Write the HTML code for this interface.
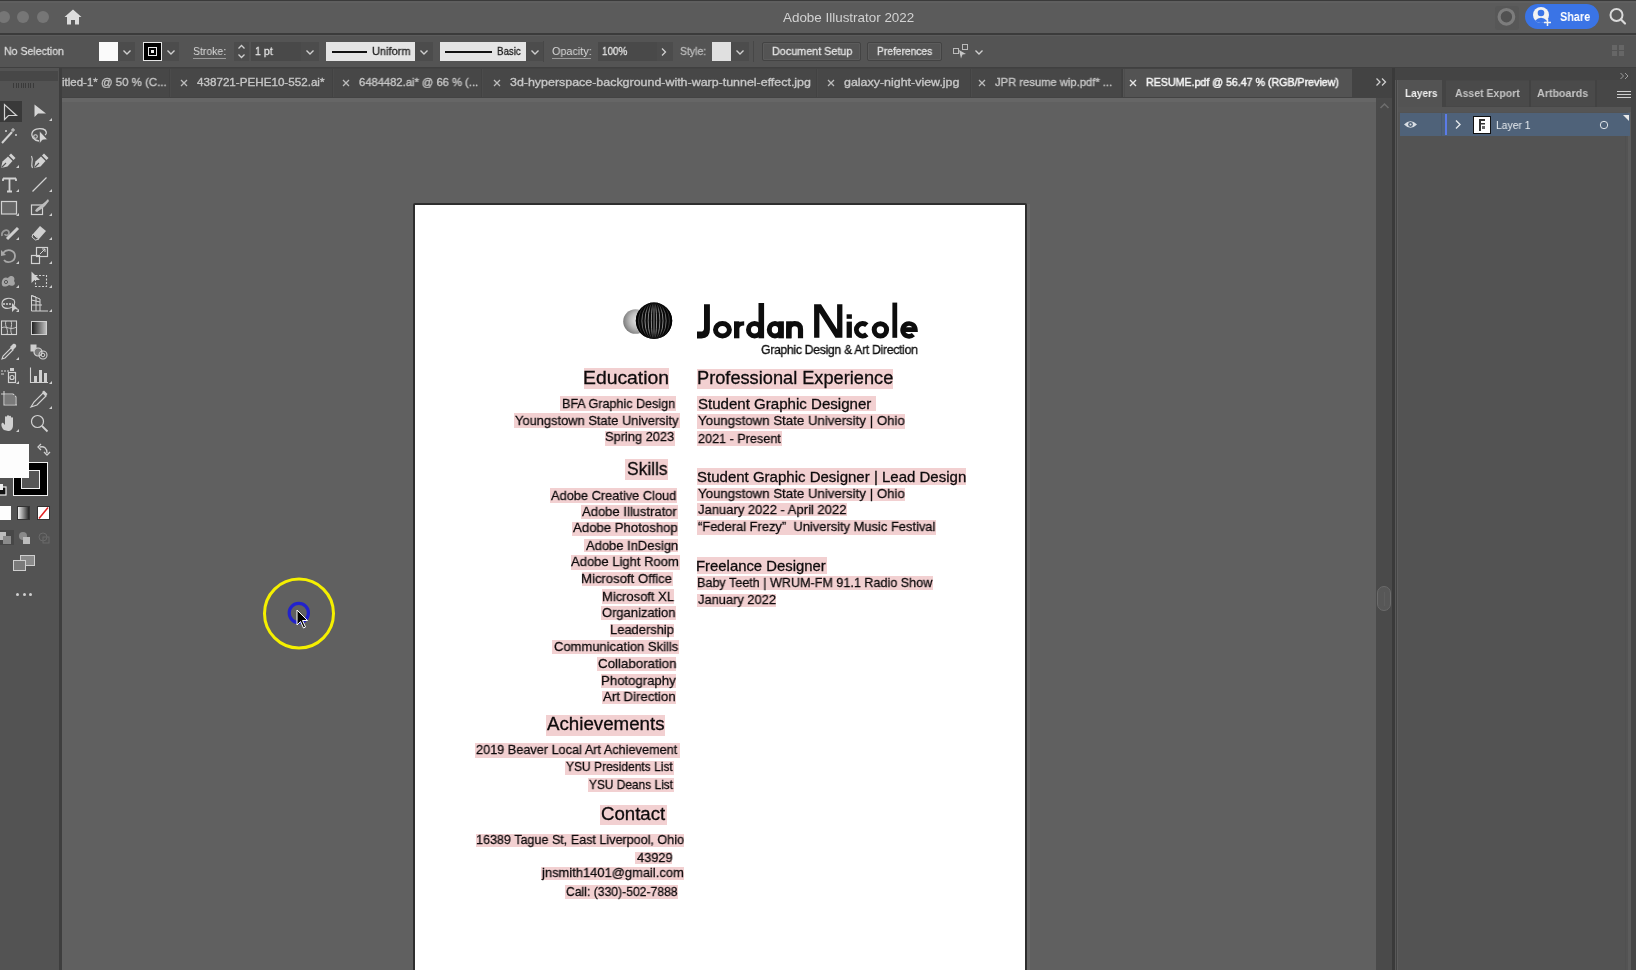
<!DOCTYPE html>
<html><head><meta charset="utf-8">
<style>
*{margin:0;padding:0;box-sizing:border-box}
html,body{width:1636px;height:970px;overflow:hidden;background:#535353;font-family:"Liberation Sans",sans-serif}
.a{position:absolute}
.t{position:absolute;white-space:pre;will-change:transform}
svg{position:absolute;overflow:visible}
</style></head><body>
<div class="a" style="left:0;top:0;width:1636px;height:34px;background:#5b5b5b"></div><div class="a" style="left:0;top:0;width:1636px;height:1px;background:#3a3a3a"></div><div class="a" style="left:0px;top:1px;width:1636px;height:2px;background:#5f5f5f"></div><div class="a" style="left:0;top:33px;width:1636px;height:2px;background:#3b3b3b"></div><div class="a" style="left:0;top:35px;width:1636px;height:33px;background:#545454"></div><div class="a" style="left:0;top:35px;width:1636px;height:1px;background:#5c5c5c"></div><div class="a" style="left:0;top:67px;width:1636px;height:1px;background:#404040"></div><div class="a" style="left:0;top:68px;width:59px;height:902px;background:#535353"></div><div class="a" style="left:0;top:71px;width:58px;height:10px;background:#474747"></div><div class="a" style="left:59px;top:68px;width:3px;height:902px;background:#3e3e3e"></div><div class="a" style="left:62px;top:68px;width:1330px;height:30px;background:#434343"></div><div class="a" style="left:62px;top:98px;width:1314px;height:872px;background:#606060"></div><div class="a" style="left:62px;top:98px;width:1314px;height:4px;background:#666666"></div><div class="a" style="left:1376px;top:98px;width:16px;height:872px;background:#4a4a4a"></div><div class="a" style="left:1377px;top:586px;width:14px;height:25px;border-radius:7px;background:#575757;border:1px solid #6a6a6a"></div><div class="a" style="left:1383.5px;top:592px;width:1px;height:14px;background:#5e5e5e"></div><svg style="left:1379px;top:102px" width="11" height="8" viewBox="0 0 11 8"><path d="M1.5 6 L5.5 2 L9.5 6" fill="none" stroke="#6e6e6e" stroke-width="1.5"/></svg><div class="a" style="left:1392px;top:68px;width:3px;height:902px;background:#3a3a3a"></div><div class="a" style="left:1395px;top:68px;width:241px;height:902px;background:#535353"></div><div class="a" style="left:1395px;top:68px;width:1px;height:902px;background:#585858"></div><div class="a" style="left:1396px;top:80px;width:1px;height:890px;background:#434343"></div><div class="a" style="left:1395px;top:68px;width:241px;height:12px;background:#444444"></div><div class="a" style="left:1397px;top:80px;width:1px;height:890px;background:#5d5d5d"></div><div class="a" style="left:1625px;top:107px;width:1px;height:863px;background:#505050"></div><div class="a" style="left:1628px;top:80px;width:3px;height:890px;background:#5b5b5b"></div><div class="a" style="left:1631px;top:68px;width:5px;height:902px;background:#454545"></div><div class="a" style="left:1398px;top:80px;width:233px;height:27px;background:#474747"></div><div class="a" style="left:1398px;top:80px;width:44px;height:27px;background:#535353"></div><div class="a" style="left:1446px;top:81px;width:83px;height:25px;background:#4a4a4a"></div><div class="a" style="left:1442px;top:80px;width:4px;height:27px;background:#444"></div><div class="a" style="left:1529px;top:80px;width:2px;height:27px;background:#424242"></div><div class="a" style="left:1595px;top:80px;width:2px;height:27px;background:#424242"></div><div class="a" style="left:1531px;top:81px;width:64px;height:25px;background:#4a4a4a"></div><div class="a" style="left:1398px;top:107px;width:233px;height:5px;background:#555555"></div><div class="a" style="left:-2px;top:11px;width:12px;height:12px;border-radius:50%;background:#767676"></div><div class="a" style="left:17px;top:11px;width:12px;height:12px;border-radius:50%;background:#767676"></div><div class="a" style="left:37px;top:11px;width:12px;height:12px;border-radius:50%;background:#767676"></div><svg style="left:63px;top:8px" width="20" height="18" viewBox="0 0 20 18"><path d="M10 1.5 L18.5 9 L16 9 L16 16.5 L12 16.5 L12 12 L8 12 L8 16.5 L4 16.5 L4 9 L1.5 9 Z" fill="#dcdcdc"/></svg><div class="t" style="left:783.00px;top:11.00px;font:normal 13px 'Liberation Sans';line-height:13px;color:#d2d2d2;letter-spacing:0px;transform:scaleX(1.0318);transform-origin:0 0;">Adobe Illustrator 2022</div><div class="a" style="left:1495px;top:6px;width:24px;height:24px;border-radius:3px;background:#575757"></div><svg style="left:1495px;top:5px" width="23" height="23" viewBox="0 0 23 23"><circle cx="11.4" cy="11.8" r="7.3" fill="#515151" stroke="#7c7c7c" stroke-width="3.2"/></svg><div class="a" style="left:1525px;top:4px;width:74px;height:25px;border-radius:13px;background:#3a74e6"></div><svg style="left:1532px;top:6px" width="22" height="20" viewBox="0 0 22 20"><circle cx="9" cy="9" r="8" fill="#f2f2f2"/><circle cx="9" cy="7" r="3.3" fill="#3a74e6"/><path d="M3 14.8 Q9 8.5 15 14.8 Q12.5 17 9 17 Q5.5 17 3 14.8Z" fill="#3a74e6"/><path d="M15.5 13v7M12 16.5h7" stroke="#f2f2f2" stroke-width="1.5"/></svg><div class="t" style="left:1560.00px;top:10.00px;font:bold 13px 'Liberation Sans';line-height:13px;color:#ffffff;letter-spacing:0px;transform:scaleX(0.8356);transform-origin:0 0;">Share</div><svg style="left:1606px;top:5px" width="22" height="22" viewBox="0 0 22 22"><circle cx="10.5" cy="10" r="6" fill="none" stroke="#dadada" stroke-width="2"/><path d="M15 14.5 L19 18.5" stroke="#dadada" stroke-width="2.2" stroke-linecap="round"/></svg><div class="t" style="left:3.50px;top:45.77px;font:normal 11.5px 'Liberation Sans';line-height:11.5px;color:#dadada;letter-spacing:0px;transform:scaleX(0.9181);transform-origin:0 0;-webkit-text-stroke-width:0.3px">No Selection</div><div class="a" style="left:118px;top:42px;width:17px;height:19px;background:#4c4c4c"></div><div class="a" style="left:99px;top:42px;width:19px;height:19px;background:#fafafa"></div><svg style="left:122px;top:49px" width="10" height="7" viewBox="0 0 10 7"><path d="M1.5 1.5 L5 5 L8.5 1.5" fill="none" stroke="#cfcfcf" stroke-width="1.4"/></svg><div class="a" style="left:162px;top:42px;width:17px;height:19px;background:#4c4c4c"></div><div class="a" style="left:143px;top:42px;width:19px;height:19px;background:#000;border:1px solid #e6e6e6"></div><div class="a" style="left:148px;top:47px;width:9px;height:9px;border:1.5px solid #eee"></div><div class="a" style="left:151px;top:50px;width:3px;height:3px;background:#eee"></div><svg style="left:166px;top:49px" width="10" height="7" viewBox="0 0 10 7"><path d="M1.5 1.5 L5 5 L8.5 1.5" fill="none" stroke="#cfcfcf" stroke-width="1.4"/></svg><div class="t" style="left:193.00px;top:46.27px;font:normal 11.5px 'Liberation Sans';line-height:11.5px;color:#d8d8d8;letter-spacing:0px;transform:scaleX(0.9107);transform-origin:0 0;">Stroke:</div><div class="a" style="left:193px;top:58px;width:33px;height:1px;background:#9a9a9a"></div><div class="a" style="left:234px;top:42px;width:15px;height:19px;background:#4c4c4c"></div><svg style="left:236px;top:43px" width="11" height="17" viewBox="0 0 11 17"><path d="M2.5 5.5 L5.5 2.5 L8.5 5.5 M2.5 11.5 L5.5 14.5 L8.5 11.5" fill="none" stroke="#cfcfcf" stroke-width="1.3"/></svg><div class="a" style="left:251px;top:42px;width:50px;height:19px;background:#494949"></div><div class="t" style="left:254.50px;top:46.27px;font:normal 11.5px 'Liberation Sans';line-height:11.5px;color:#e2e2e2;letter-spacing:0px;transform:scaleX(0.9256);transform-origin:0 0;-webkit-text-stroke-width:0.3px">1 pt</div><div class="a" style="left:301px;top:42px;width:18px;height:19px;background:#4c4c4c"></div><svg style="left:305px;top:49px" width="10" height="7" viewBox="0 0 10 7"><path d="M1.5 1.5 L5 5 L8.5 1.5" fill="none" stroke="#cfcfcf" stroke-width="1.4"/></svg><div class="a" style="left:326px;top:42px;width:89px;height:19px;background:#e4e4e4"></div><div class="a" style="left:332px;top:51px;width:35px;height:2px;background:#111"></div><div class="t" style="left:371.50px;top:46.27px;font:normal 11.5px 'Liberation Sans';line-height:11.5px;color:#222;letter-spacing:0px;transform:scaleX(0.9578);transform-origin:0 0;-webkit-text-stroke-width:0.3px">Uniform</div><div class="a" style="left:415px;top:42px;width:18px;height:19px;background:#4c4c4c"></div><svg style="left:419px;top:49px" width="10" height="7" viewBox="0 0 10 7"><path d="M1.5 1.5 L5 5 L8.5 1.5" fill="none" stroke="#cfcfcf" stroke-width="1.4"/></svg><div class="a" style="left:440px;top:42px;width:86px;height:19px;background:#e4e4e4"></div><div class="a" style="left:445px;top:51px;width:47px;height:2px;background:#111"></div><div class="t" style="left:496.50px;top:46.27px;font:normal 11.5px 'Liberation Sans';line-height:11.5px;color:#222;letter-spacing:0px;transform:scaleX(0.8459);transform-origin:0 0;-webkit-text-stroke-width:0.3px">Basic</div><div class="a" style="left:526px;top:42px;width:18px;height:19px;background:#4c4c4c"></div><svg style="left:530px;top:49px" width="10" height="7" viewBox="0 0 10 7"><path d="M1.5 1.5 L5 5 L8.5 1.5" fill="none" stroke="#cfcfcf" stroke-width="1.4"/></svg><div class="a" style="left:543px;top:41px;width:1px;height:21px;background:#474747"></div><div class="t" style="left:552.00px;top:46.27px;font:normal 11.5px 'Liberation Sans';line-height:11.5px;color:#d8d8d8;letter-spacing:0px;transform:scaleX(0.9408);transform-origin:0 0;">Opacity:</div><div class="a" style="left:552px;top:58px;width:39px;height:1px;background:#9a9a9a"></div><div class="a" style="left:598px;top:42px;width:59px;height:19px;background:#494949"></div><div class="t" style="left:601.50px;top:46.27px;font:normal 11.5px 'Liberation Sans';line-height:11.5px;color:#e2e2e2;letter-spacing:0px;transform:scaleX(0.8565);transform-origin:0 0;-webkit-text-stroke-width:0.3px">100%</div><div class="a" style="left:657px;top:42px;width:16px;height:19px;background:#4c4c4c"></div><svg style="left:660px;top:47px" width="8" height="10" viewBox="0 0 8 10"><path d="M2 1.5 L5.5 5 L2 8.5" fill="none" stroke="#cfcfcf" stroke-width="1.3"/></svg><div class="t" style="left:680.00px;top:46.27px;font:normal 11.5px 'Liberation Sans';line-height:11.5px;color:#bcbcbc;letter-spacing:0px;transform:scaleX(0.9102);transform-origin:0 0;-webkit-text-stroke-width:0.3px">Style:</div><div class="a" style="left:731px;top:42px;width:18px;height:19px;background:#4c4c4c"></div><div class="a" style="left:712px;top:42px;width:19px;height:19px;background:#e0e0e0"></div><svg style="left:735px;top:49px" width="10" height="7" viewBox="0 0 10 7"><path d="M1.5 1.5 L5 5 L8.5 1.5" fill="none" stroke="#cfcfcf" stroke-width="1.4"/></svg><div class="a" style="left:753px;top:41px;width:1px;height:21px;background:#474747"></div><div class="a" style="left:762px;top:42px;width:99px;height:19px;border:1px solid #434343;box-shadow:inset 0 0 0 1px #5b5b5b;border-radius:2px"></div><div class="t" style="left:772.00px;top:46.27px;font:normal 11.5px 'Liberation Sans';line-height:11.5px;color:#e2e2e2;letter-spacing:0px;transform:scaleX(0.9383);transform-origin:0 0;-webkit-text-stroke-width:0.3px">Document Setup</div><div class="a" style="left:867px;top:42px;width:75px;height:19px;border:1px solid #434343;box-shadow:inset 0 0 0 1px #5b5b5b;border-radius:2px"></div><div class="t" style="left:876.50px;top:46.27px;font:normal 11.5px 'Liberation Sans';line-height:11.5px;color:#e2e2e2;letter-spacing:0px;transform:scaleX(0.8915);transform-origin:0 0;-webkit-text-stroke-width:0.3px">Preferences</div><svg style="left:952px;top:43px" width="18" height="17" viewBox="0 0 18 17"><rect x="1.5" y="5.5" width="5" height="5" fill="none" stroke="#bbb" stroke-width="1"/><rect x="10.5" y="1.5" width="5" height="5" fill="none" stroke="#bbb" stroke-width="1"/><path d="M7 7 L14 11 L10.5 11.5 L9 15.5Z" fill="#c8c8c8"/></svg><svg style="left:974px;top:49px" width="10" height="7" viewBox="0 0 10 7"><path d="M1.5 1.5 L5 5 L8.5 1.5" fill="none" stroke="#cfcfcf" stroke-width="1.4"/></svg><svg style="left:1611px;top:44px" width="14" height="13" viewBox="0 0 14 13"><path d="M1 1h5v5H1zM8 1h5v5H8zM1 7h5v5H1zM8 7h5v5H8z" fill="#666"/></svg><div class="a" style="left:62px;top:69px;width:109px;height:28px;background:#474747"></div><div class="a" style="left:169px;top:69px;width:1px;height:28px;background:#424242"></div><div class="a" style="left:170px;top:69px;width:1px;height:28px;background:#4b4b4b"></div><div class="t" style="left:62.00px;top:76.77px;font:normal 11.5px 'Liberation Sans';line-height:11.5px;color:#c6c6c6;letter-spacing:0px;transform:scaleX(0.9972);transform-origin:0 0;-webkit-text-stroke-width:0.35px">itled-1* @ 50 % (C...</div><div class="a" style="left:171px;top:69px;width:163px;height:28px;background:#474747"></div><div class="a" style="left:332px;top:69px;width:1px;height:28px;background:#424242"></div><div class="a" style="left:333px;top:69px;width:1px;height:28px;background:#4b4b4b"></div><svg style="left:179.5px;top:79px" width="8" height="8" viewBox="0 0 8 8"><path d="M1 1L7 7M7 1L1 7" stroke="#bcbcbc" stroke-width="1.3"/></svg><div class="t" style="left:196.50px;top:76.77px;font:normal 11.5px 'Liberation Sans';line-height:11.5px;color:#c6c6c6;letter-spacing:0px;transform:scaleX(1.0121);transform-origin:0 0;-webkit-text-stroke-width:0.35px">438721-PEHE10-552.ai*</div><div class="a" style="left:334px;top:69px;width:149px;height:28px;background:#474747"></div><div class="a" style="left:481px;top:69px;width:1px;height:28px;background:#424242"></div><div class="a" style="left:482px;top:69px;width:1px;height:28px;background:#4b4b4b"></div><svg style="left:342px;top:79px" width="8" height="8" viewBox="0 0 8 8"><path d="M1 1L7 7M7 1L1 7" stroke="#bcbcbc" stroke-width="1.3"/></svg><div class="t" style="left:359.00px;top:76.77px;font:normal 11.5px 'Liberation Sans';line-height:11.5px;color:#c6c6c6;letter-spacing:0px;transform:scaleX(0.9748);transform-origin:0 0;-webkit-text-stroke-width:0.35px">6484482.ai* @ 66 % (...</div><div class="a" style="left:483px;top:69px;width:335px;height:28px;background:#474747"></div><div class="a" style="left:816px;top:69px;width:1px;height:28px;background:#424242"></div><div class="a" style="left:817px;top:69px;width:1px;height:28px;background:#4b4b4b"></div><svg style="left:492.5px;top:79px" width="8" height="8" viewBox="0 0 8 8"><path d="M1 1L7 7M7 1L1 7" stroke="#bcbcbc" stroke-width="1.3"/></svg><div class="t" style="left:510.00px;top:76.77px;font:normal 11.5px 'Liberation Sans';line-height:11.5px;color:#c6c6c6;letter-spacing:0px;transform:scaleX(1.0806);transform-origin:0 0;-webkit-text-stroke-width:0.35px">3d-hyperspace-background-with-warp-tunnel-effect.jpg</div><div class="a" style="left:818px;top:69px;width:154px;height:28px;background:#474747"></div><div class="a" style="left:970px;top:69px;width:1px;height:28px;background:#424242"></div><div class="a" style="left:971px;top:69px;width:1px;height:28px;background:#4b4b4b"></div><svg style="left:826.5px;top:79px" width="8" height="8" viewBox="0 0 8 8"><path d="M1 1L7 7M7 1L1 7" stroke="#bcbcbc" stroke-width="1.3"/></svg><div class="t" style="left:844.00px;top:76.77px;font:normal 11.5px 'Liberation Sans';line-height:11.5px;color:#c6c6c6;letter-spacing:0px;transform:scaleX(1.0813);transform-origin:0 0;-webkit-text-stroke-width:0.35px">galaxy-night-view.jpg</div><div class="a" style="left:972px;top:69px;width:151px;height:28px;background:#474747"></div><div class="a" style="left:1121px;top:69px;width:1px;height:28px;background:#424242"></div><div class="a" style="left:1122px;top:69px;width:1px;height:28px;background:#4b4b4b"></div><svg style="left:977.5px;top:79px" width="8" height="8" viewBox="0 0 8 8"><path d="M1 1L7 7M7 1L1 7" stroke="#bcbcbc" stroke-width="1.3"/></svg><div class="t" style="left:995.00px;top:76.77px;font:normal 11.5px 'Liberation Sans';line-height:11.5px;color:#c6c6c6;letter-spacing:0px;transform:scaleX(0.9753);transform-origin:0 0;-webkit-text-stroke-width:0.35px">JPR resume wip.pdf* ...</div><div class="a" style="left:1122px;top:69px;width:230px;height:28px;background:#535353"></div><div class="a" style="left:1122px;top:69px;width:1px;height:28px;background:#404040"></div><div class="a" style="left:1124px;top:69px;width:1px;height:28px;background:#4d4d4d"></div><svg style="left:1129px;top:79px" width="8" height="8" viewBox="0 0 8 8"><path d="M1 1L7 7M7 1L1 7" stroke="#e6e6e6" stroke-width="1.4"/></svg><div class="t" style="left:1146.00px;top:76.77px;font:normal 11.5px 'Liberation Sans';line-height:11.5px;color:#f4f4f4;letter-spacing:0px;transform:scaleX(0.9248);transform-origin:0 0;-webkit-text-stroke-width:0.5px">RESUME.pdf @ 56.47 % (RGB/Preview)</div><svg style="left:1375px;top:77px" width="13" height="10" viewBox="0 0 13 10"><path d="M1.5 1.5 L5 5 L1.5 8.5 M7 1.5 L10.5 5 L7 8.5" fill="none" stroke="#cfcfcf" stroke-width="1.3"/></svg><div class="a" style="left:59px;top:68px;width:3px;height:30px;background:#3e3e3e"></div><svg style="left:1619px;top:72px" width="12" height="8" viewBox="0 0 12 8"><path d="M1.5 1 L4.5 4 L1.5 7 M6 1 L9 4 L6 7" fill="none" stroke="#9c9c9c" stroke-width="1"/></svg><div class="t" style="left:1404.50px;top:87.69px;font:bold 11px 'Liberation Sans';line-height:11px;color:#f0f0f0;letter-spacing:0px;transform:scaleX(0.9193);transform-origin:0 0;">Layers</div><div class="t" style="left:1455.00px;top:87.69px;font:bold 11px 'Liberation Sans';line-height:11px;color:#c4c4c4;letter-spacing:0px;transform:scaleX(0.9532);transform-origin:0 0;">Asset Export</div><div class="t" style="left:1537.00px;top:87.69px;font:bold 11px 'Liberation Sans';line-height:11px;color:#c4c4c4;letter-spacing:0px;transform:scaleX(0.9725);transform-origin:0 0;">Artboards</div><div class="a" style="left:1617px;top:91px;width:14px;height:1px;background:#cfcfcf"></div><div class="a" style="left:1617px;top:94px;width:14px;height:1px;background:#cfcfcf"></div><div class="a" style="left:1617px;top:97px;width:14px;height:1px;background:#cfcfcf"></div><div class="a" style="left:1400px;top:113px;width:230px;height:23px;background:#4f6279"></div><svg style="left:1403px;top:119px" width="15" height="11" viewBox="0 0 15 11"><path d="M1 5.5 Q7.5 -1 14 5.5 Q7.5 12 1 5.5Z" fill="#d8dde3"/><circle cx="7.5" cy="5.5" r="2.4" fill="#4f6279"/><circle cx="7.5" cy="5.5" r="1" fill="#d8dde3"/></svg><div class="a" style="left:1441px;top:113px;width:1px;height:23px;background:#4a5a70"></div><div class="a" style="left:1445px;top:114px;width:2px;height:21px;background:#5b7be8"></div><svg style="left:1454px;top:119px" width="8" height="11" viewBox="0 0 8 11"><path d="M2 1.5 L6 5.5 L2 9.5" fill="none" stroke="#e2e6ea" stroke-width="1.4"/></svg><div class="a" style="left:1473px;top:116px;width:18px;height:18px;background:#fff;border:1px solid #111"></div><svg style="left:1476px;top:118px" width="12" height="14" viewBox="0 0 12 14"><path d="M3 1h6v2H5v2h4v1.5H5V13H3z" fill="#333"/><path d="M6 8h3v3H6z" fill="#666"/></svg><div class="t" style="left:1496.00px;top:119.69px;font:normal 11px 'Liberation Sans';line-height:11px;color:#e8ecf0;letter-spacing:0px;transform:scaleX(0.9433);transform-origin:0 0;">Layer 1</div><svg style="left:1599px;top:120px" width="10" height="10" viewBox="0 0 10 10"><circle cx="5" cy="5" r="3.7" fill="none" stroke="#e0e4e8" stroke-width="1"/></svg><svg style="left:1622px;top:114px" width="8" height="8" viewBox="0 0 8 8"><path d="M1 1 L7 1 L7 7Z" fill="#e8e8e8"/></svg><div class="a" style="left:1027px;top:204px;width:3px;height:766px;background:#686868"></div><div class="a" style="left:413px;top:203px;width:614px;height:767px;background:#2e2e2e;border-radius:2px 2px 0 0"></div><div class="a" style="left:415px;top:205px;width:610px;height:765px;background:#ffffff"></div><div class="a" style="left:583.7px;top:368.0px;width:85.6px;height:21.3px;background:#f2d0d1"></div><div class="t" style="left:583.29px;top:370.09px;font:normal 17.5px 'Liberation Sans';line-height:17.5px;color:#0e0b0c;letter-spacing:0px;transform:scaleX(1.1051);transform-origin:0 0;-webkit-text-stroke:0.3px #0e0b0c">Education</div><div class="a" style="left:560.0px;top:395.5px;width:116.0px;height:15.8px;background:#f2d0d1"></div><div class="t" style="left:562.06px;top:397.46px;font:normal 13.4px 'Liberation Sans';line-height:13.4px;color:#0e0b0c;letter-spacing:0px;transform:scaleX(0.9377);transform-origin:0 0;-webkit-text-stroke:0.28px #0e0b0c">BFA Graphic Design</div><div class="a" style="left:514.0px;top:413.0px;width:165.7px;height:14.8px;background:#f2d0d1"></div><div class="t" style="left:515.30px;top:413.96px;font:normal 13.4px 'Liberation Sans';line-height:13.4px;color:#0e0b0c;letter-spacing:0px;transform:scaleX(0.9620);transform-origin:0 0;-webkit-text-stroke:0.28px #0e0b0c">Youngstown State University</div><div class="a" style="left:604.5px;top:431.0px;width:70.3px;height:14.6px;background:#f2d0d1"></div><div class="t" style="left:605.40px;top:430.46px;font:normal 13.4px 'Liberation Sans';line-height:13.4px;color:#0e0b0c;letter-spacing:0px;transform:scaleX(0.9586);transform-origin:0 0;-webkit-text-stroke:0.28px #0e0b0c">Spring 2023</div><div class="a" style="left:625.1px;top:459.2px;width:42.9px;height:20.8px;background:#f2d0d1"></div><div class="t" style="left:626.50px;top:461.49px;font:normal 17.5px 'Liberation Sans';line-height:17.5px;color:#0e0b0c;letter-spacing:0px;transform:scaleX(0.9930);transform-origin:0 0;-webkit-text-stroke:0.3px #0e0b0c">Skills</div><div class="a" style="left:550.4px;top:488.4px;width:126.6px;height:14.6px;background:#f2d0d1"></div><div class="t" style="left:551.40px;top:488.66px;font:normal 13.4px 'Liberation Sans';line-height:13.4px;color:#0e0b0c;letter-spacing:0px;transform:scaleX(0.9566);transform-origin:0 0;-webkit-text-stroke:0.28px #0e0b0c">Adobe Creative Cloud</div><div class="a" style="left:581.0px;top:505.0px;width:97.4px;height:14.0px;background:#f2d0d1"></div><div class="t" style="left:582.40px;top:505.36px;font:normal 13.4px 'Liberation Sans';line-height:13.4px;color:#0e0b0c;letter-spacing:0px;transform:scaleX(0.9720);transform-origin:0 0;-webkit-text-stroke:0.28px #0e0b0c">Adobe Illustrator</div><div class="a" style="left:572.3px;top:521.8px;width:106.1px;height:13.9px;background:#f2d0d1"></div><div class="t" style="left:573.40px;top:521.36px;font:normal 13.4px 'Liberation Sans';line-height:13.4px;color:#0e0b0c;letter-spacing:0px;transform:scaleX(0.9837);transform-origin:0 0;-webkit-text-stroke:0.28px #0e0b0c">Adobe Photoshop</div><div class="a" style="left:584.2px;top:538.5px;width:94.2px;height:13.9px;background:#f2d0d1"></div><div class="t" style="left:585.60px;top:538.76px;font:normal 13.4px 'Liberation Sans';line-height:13.4px;color:#0e0b0c;letter-spacing:0px;transform:scaleX(0.9679);transform-origin:0 0;-webkit-text-stroke:0.28px #0e0b0c">Adobe InDesign</div><div class="a" style="left:570.6px;top:555.0px;width:109.2px;height:14.7px;background:#f2d0d1"></div><div class="t" style="left:571.30px;top:555.46px;font:normal 13.4px 'Liberation Sans';line-height:13.4px;color:#0e0b0c;letter-spacing:0px;transform:scaleX(0.9723);transform-origin:0 0;-webkit-text-stroke:0.28px #0e0b0c">Adobe Light Room</div><div class="a" style="left:581.7px;top:571.8px;width:91.5px;height:14.6px;background:#f2d0d1"></div><div class="t" style="left:581.42px;top:572.16px;font:normal 13.4px 'Liberation Sans';line-height:13.4px;color:#0e0b0c;letter-spacing:0px;transform:scaleX(0.9812);transform-origin:0 0;-webkit-text-stroke:0.28px #0e0b0c">Microsoft Office</div><div class="a" style="left:601.6px;top:589.4px;width:72.4px;height:14.6px;background:#f2d0d1"></div><div class="t" style="left:601.73px;top:589.96px;font:normal 13.4px 'Liberation Sans';line-height:13.4px;color:#0e0b0c;letter-spacing:0px;transform:scaleX(0.9676);transform-origin:0 0;-webkit-text-stroke:0.28px #0e0b0c">Microsoft XL</div><div class="a" style="left:601.0px;top:606.0px;width:74.6px;height:14.2px;background:#f2d0d1"></div><div class="t" style="left:602.00px;top:606.06px;font:normal 13.4px 'Liberation Sans';line-height:13.4px;color:#0e0b0c;letter-spacing:0px;transform:scaleX(0.9672);transform-origin:0 0;-webkit-text-stroke:0.28px #0e0b0c">Organization</div><div class="a" style="left:609.7px;top:624.0px;width:64.3px;height:13.0px;background:#f2d0d1"></div><div class="t" style="left:610.04px;top:623.16px;font:normal 13.4px 'Liberation Sans';line-height:13.4px;color:#0e0b0c;letter-spacing:0px;transform:scaleX(0.9643);transform-origin:0 0;-webkit-text-stroke:0.28px #0e0b0c">Leadership</div><div class="a" style="left:552.3px;top:639.6px;width:126.4px;height:14.8px;background:#f2d0d1"></div><div class="t" style="left:553.50px;top:639.56px;font:normal 13.4px 'Liberation Sans';line-height:13.4px;color:#0e0b0c;letter-spacing:0px;transform:scaleX(0.9704);transform-origin:0 0;-webkit-text-stroke:0.28px #0e0b0c">Communication Skills</div><div class="a" style="left:597.0px;top:657.0px;width:79.4px;height:14.0px;background:#f2d0d1"></div><div class="t" style="left:598.00px;top:656.96px;font:normal 13.4px 'Liberation Sans';line-height:13.4px;color:#0e0b0c;letter-spacing:0px;transform:scaleX(0.9942);transform-origin:0 0;-webkit-text-stroke:0.28px #0e0b0c">Collaboration</div><div class="a" style="left:601.0px;top:673.8px;width:75.4px;height:14.2px;background:#f2d0d1"></div><div class="t" style="left:601.02px;top:673.66px;font:normal 13.4px 'Liberation Sans';line-height:13.4px;color:#0e0b0c;letter-spacing:0px;transform:scaleX(0.9835);transform-origin:0 0;-webkit-text-stroke:0.28px #0e0b0c">Photography</div><div class="a" style="left:602.3px;top:690.6px;width:73.7px;height:13.4px;background:#f2d0d1"></div><div class="t" style="left:603.30px;top:689.76px;font:normal 13.4px 'Liberation Sans';line-height:13.4px;color:#0e0b0c;letter-spacing:0px;transform:scaleX(0.9861);transform-origin:0 0;-webkit-text-stroke:0.28px #0e0b0c">Art Direction</div><div class="a" style="left:545.8px;top:715.0px;width:119.2px;height:20.8px;background:#f2d0d1"></div><div class="t" style="left:546.80px;top:716.29px;font:normal 17.5px 'Liberation Sans';line-height:17.5px;color:#0e0b0c;letter-spacing:0px;transform:scaleX(1.0693);transform-origin:0 0;-webkit-text-stroke:0.3px #0e0b0c">Achievements</div><div class="a" style="left:475.4px;top:743.4px;width:204.6px;height:15.1px;background:#f2d0d1"></div><div class="t" style="left:476.40px;top:743.26px;font:normal 13.4px 'Liberation Sans';line-height:13.4px;color:#0e0b0c;letter-spacing:0px;transform:scaleX(0.9485);transform-origin:0 0;-webkit-text-stroke:0.28px #0e0b0c">2019 Beaver Local Art Achievement</div><div class="a" style="left:564.9px;top:760.7px;width:109.3px;height:14.7px;background:#f2d0d1"></div><div class="t" style="left:566.40px;top:760.46px;font:normal 13.4px 'Liberation Sans';line-height:13.4px;color:#0e0b0c;letter-spacing:0px;transform:scaleX(0.8965);transform-origin:0 0;-webkit-text-stroke:0.28px #0e0b0c">YSU Presidents List</div><div class="a" style="left:587.6px;top:778.3px;width:86.6px;height:14.0px;background:#f2d0d1"></div><div class="t" style="left:588.80px;top:777.76px;font:normal 13.4px 'Liberation Sans';line-height:13.4px;color:#0e0b0c;letter-spacing:0px;transform:scaleX(0.8882);transform-origin:0 0;-webkit-text-stroke:0.28px #0e0b0c">YSU Deans List</div><div class="a" style="left:600.0px;top:804.5px;width:66.8px;height:20.5px;background:#f2d0d1"></div><div class="t" style="left:601.10px;top:806.29px;font:normal 17.5px 'Liberation Sans';line-height:17.5px;color:#0e0b0c;letter-spacing:0px;transform:scaleX(1.0637);transform-origin:0 0;-webkit-text-stroke:0.3px #0e0b0c">Contact</div><div class="a" style="left:475.8px;top:833.9px;width:208.6px;height:13.6px;background:#f2d0d1"></div><div class="t" style="left:475.96px;top:833.26px;font:normal 13.4px 'Liberation Sans';line-height:13.4px;color:#0e0b0c;letter-spacing:0px;transform:scaleX(0.9384);transform-origin:0 0;-webkit-text-stroke:0.28px #0e0b0c">16389 Tague St, East Liverpool, Ohio</div><div class="a" style="left:635.3px;top:851.5px;width:36.7px;height:12.5px;background:#f2d0d1"></div><div class="t" style="left:636.80px;top:851.36px;font:normal 13.4px 'Liberation Sans';line-height:13.4px;color:#0e0b0c;letter-spacing:0px;transform:scaleX(0.9568);transform-origin:0 0;-webkit-text-stroke:0.28px #0e0b0c">43929</div><div class="a" style="left:540.7px;top:866.9px;width:143.7px;height:13.1px;background:#f2d0d1"></div><div class="t" style="left:542.37px;top:866.36px;font:normal 13.4px 'Liberation Sans';line-height:13.4px;color:#0e0b0c;letter-spacing:0px;transform:scaleX(0.9657);transform-origin:0 0;-webkit-text-stroke:0.28px #0e0b0c">jnsmith1401@gmail.com</div><div class="a" style="left:564.9px;top:884.5px;width:112.9px;height:14.7px;background:#f2d0d1"></div><div class="t" style="left:565.90px;top:884.66px;font:normal 13.4px 'Liberation Sans';line-height:13.4px;color:#0e0b0c;letter-spacing:0px;transform:scaleX(0.9087);transform-origin:0 0;-webkit-text-stroke:0.28px #0e0b0c">Call: (330)-502-7888</div><div class="a" style="left:697.0px;top:368.5px;width:196.2px;height:20.8px;background:#f2d0d1"></div><div class="t" style="left:696.56px;top:369.79px;font:normal 17.5px 'Liberation Sans';line-height:17.5px;color:#0e0b0c;letter-spacing:0px;transform:scaleX(1.0402);transform-origin:0 0;-webkit-text-stroke:0.3px #0e0b0c">Professional Experience</div><div class="a" style="left:697.0px;top:395.5px;width:178.6px;height:15.1px;background:#f2d0d1"></div><div class="t" style="left:697.60px;top:396.88px;font:normal 14.2px 'Liberation Sans';line-height:14.2px;color:#0e0b0c;letter-spacing:0px;transform:scaleX(1.0616);transform-origin:0 0;-webkit-text-stroke:0.28px #0e0b0c">Student Graphic Designer</div><div class="a" style="left:697.0px;top:414.0px;width:207.5px;height:15.0px;background:#f2d0d1"></div><div class="t" style="left:697.60px;top:414.46px;font:normal 13.4px 'Liberation Sans';line-height:13.4px;color:#0e0b0c;letter-spacing:0px;transform:scaleX(0.9884);transform-origin:0 0;-webkit-text-stroke:0.28px #0e0b0c">Youngstown State University | Ohio</div><div class="a" style="left:697.0px;top:431.1px;width:84.7px;height:14.7px;background:#f2d0d1"></div><div class="t" style="left:697.60px;top:431.56px;font:normal 13.4px 'Liberation Sans';line-height:13.4px;color:#0e0b0c;letter-spacing:0px;transform:scaleX(0.9431);transform-origin:0 0;-webkit-text-stroke:0.28px #0e0b0c">2021 - Present</div><div class="a" style="left:697.1px;top:468.0px;width:269.1px;height:16.8px;background:#f2d0d1"></div><div class="t" style="left:697.40px;top:469.78px;font:normal 14.2px 'Liberation Sans';line-height:14.2px;color:#0e0b0c;letter-spacing:0px;transform:scaleX(1.0580);transform-origin:0 0;-webkit-text-stroke:0.28px #0e0b0c">Student Graphic Designer | Lead Design</div><div class="a" style="left:697.0px;top:487.5px;width:207.5px;height:13.6px;background:#f2d0d1"></div><div class="t" style="left:697.60px;top:486.76px;font:normal 13.4px 'Liberation Sans';line-height:13.4px;color:#0e0b0c;letter-spacing:0px;transform:scaleX(0.9884);transform-origin:0 0;-webkit-text-stroke:0.28px #0e0b0c">Youngstown State University | Ohio</div><div class="a" style="left:697.0px;top:503.4px;width:149.9px;height:13.0px;background:#f2d0d1"></div><div class="t" style="left:697.60px;top:503.16px;font:normal 13.4px 'Liberation Sans';line-height:13.4px;color:#0e0b0c;letter-spacing:0px;transform:scaleX(0.9725);transform-origin:0 0;-webkit-text-stroke:0.28px #0e0b0c">January 2022 - April 2022</div><div class="a" style="left:697.0px;top:520.0px;width:238.5px;height:14.5px;background:#f2d0d1"></div><div class="t" style="left:697.60px;top:519.76px;font:normal 13.4px 'Liberation Sans';line-height:13.4px;color:#0e0b0c;letter-spacing:0px;transform:scaleX(0.9638);transform-origin:0 0;-webkit-text-stroke:0.28px #0e0b0c">“Federal Frezy”  University Music Festival</div><div class="a" style="left:696.7px;top:557.2px;width:130.3px;height:16.6px;background:#f2d0d1"></div><div class="t" style="left:696.35px;top:558.78px;font:normal 14.2px 'Liberation Sans';line-height:14.2px;color:#0e0b0c;letter-spacing:0px;transform:scaleX(1.0481);transform-origin:0 0;-webkit-text-stroke:0.28px #0e0b0c">Freelance Designer</div><div class="a" style="left:697.0px;top:576.2px;width:236.2px;height:14.3px;background:#f2d0d1"></div><div class="t" style="left:696.66px;top:576.06px;font:normal 13.4px 'Liberation Sans';line-height:13.4px;color:#0e0b0c;letter-spacing:0px;transform:scaleX(0.9397);transform-origin:0 0;-webkit-text-stroke:0.28px #0e0b0c">Baby Teeth | WRUM-FM 91.1 Radio Show</div><div class="a" style="left:697.0px;top:593.7px;width:78.8px;height:13.5px;background:#f2d0d1"></div><div class="t" style="left:697.60px;top:592.86px;font:normal 13.4px 'Liberation Sans';line-height:13.4px;color:#0e0b0c;letter-spacing:0px;transform:scaleX(0.9616);transform-origin:0 0;-webkit-text-stroke:0.28px #0e0b0c">January 2022</div><svg style="left:690px;top:295px" width="240" height="50" viewBox="690 295 240 50"><g fill="#0d0d0d">
<path d="M704 304.2 H709.9 V329.5 Q709.9 338.4 701.5 338.4 H697 V331.6 H700.8 Q704 331.6 704 328.5 Z"/>
<path d="M734 321.3 H739.4 V338.3 H734 Z"/>
<rect x="758.5" y="303" width="5.6" height="35.3"/>
<rect x="778.3" y="321.3" width="5.6" height="17"/>
<rect x="786.1" y="321.3" width="5.4" height="17"/>
<path d="M814.1 304.2 H819.4 V337.8 H814.1 Z M837.1 304.2 H842.4 V337.8 H837.1 Z M814.1 304.2 H821 L842.4 337.8 H835.5 Z"/>
<rect x="846.6" y="314.3" width="5.3" height="4.5"/><rect x="846.6" y="321.6" width="5.3" height="16.2"/>
<rect x="892.4" y="302.6" width="4.8" height="35.2"/>
</g><g fill="none" stroke="#0d0d0d" stroke-width="5">
<ellipse cx="722.45" cy="329.7" rx="6.95" ry="6.25"/>
<path d="M736.7 330 Q736.7 323.5 744.2 323.4" stroke-width="4.2"/>
<ellipse cx="754.6" cy="329.7" rx="6.1" ry="6.25"/>
<ellipse cx="775" cy="329.7" rx="5.7" ry="6.25"/>
<path d="M788.8 338.3 V330 Q788.8 323.6 794.7 323.6 Q800.5 323.6 800.5 329.5 V338.3" stroke-width="5.2"/>
<path d="M866.8 325.2 A6.2 6.2 0 1 0 866.8 334.4" />
<ellipse cx="880.4" cy="329.8" rx="6.2" ry="6.1"/>
<path d="M902.6 329.6 H915.4 A6.4 6.4 0 1 0 913.4 334.6" stroke-width="4.6"/>
</g></svg><div class="t" style="left:761.00px;top:342.99px;font:normal 13.6px 'Liberation Sans';line-height:13.6px;color:#111;letter-spacing:-0.35px;transform:scaleX(0.9003);transform-origin:0 0;-webkit-text-stroke:0.35px #111">Graphic Design &amp; Art Direction</div><svg style="left:615px;top:295px" width="70" height="50" viewBox="615 295 70 50">
<defs><radialGradient id="lg" cx="0.62" cy="0.45" r="0.7"><stop offset="0" stop-color="#f0f0f0"/><stop offset="0.5" stop-color="#bcbcbc"/><stop offset="1" stop-color="#6a6a6a"/></radialGradient>
<radialGradient id="vg" cx="0.5" cy="0.5" r="0.5"><stop offset="0.6" stop-color="#000" stop-opacity="0"/><stop offset="1" stop-color="#000" stop-opacity="0.95"/></radialGradient><clipPath id="dc"><circle cx="654" cy="320.8" r="18.2"/></clipPath></defs>
<circle cx="635.5" cy="321.5" r="12.3" fill="url(#lg)"/>
<circle cx="654" cy="320.8" r="18.2" fill="#0c0c0c"/>
<g clip-path="url(#dc)" fill="none" stroke="#b8b8b8" stroke-width="0.7">
<path d="M654 303 V339"/><ellipse cx="654" cy="320.8" rx="2.6" ry="19.5"/><ellipse cx="654" cy="320.8" rx="5.8" ry="19.5"/><ellipse cx="654" cy="320.8" rx="9" ry="19.5"/><ellipse cx="654" cy="320.8" rx="12.2" ry="19.5"/><ellipse cx="654" cy="320.8" rx="15.4" ry="19.5"/>
</g><circle cx="654" cy="320.8" r="18.2" fill="url(#vg)"/></g></svg><svg style="left:255px;top:570px" width="90" height="90" viewBox="255 570 90 90"><circle cx="299" cy="613.5" r="34.5" fill="none" stroke="#f5f000" stroke-width="3"/><circle cx="298.8" cy="613" r="9.6" fill="none" stroke="#2222cc" stroke-width="3.2"/><path d="M297 610 L297 625 L300.5 621.5 L303.5 628 L305.5 627 L302.5 620.5 L307.5 620.5Z" fill="#000" stroke="#fff" stroke-width="1"/></svg><div class="a" style="left:13px;top:83px;width:21px;height:5px;background:repeating-linear-gradient(90deg,#3a3a3a 0 1px,transparent 1px 2.5px)"></div><div class="a" style="left:0px;top:101px;width:22px;height:21px;background:#393939"></div><svg style="left:3px;top:103px" width="16" height="18" viewBox="0 0 16 18" fill="none" stroke="#d2d2d2" stroke-width="1.2"><path d="M1.5 1.5 L1.5 16.5 L5.5 12.5 L13.5 12.5Z" stroke-width="1.2"/></svg><svg style="left:33px;top:103px" width="16" height="18" viewBox="0 0 16 18" fill="none" stroke="#d2d2d2" stroke-width="1.2"><path d="M1.5 1.5 L1.5 14 L5 10.5 L13 10.5Z" fill="#d6d6d6" stroke="none"/></svg><svg style="left:49px;top:118px" width="3" height="3" viewBox="0 0 3 3"><path d="M3 0 L3 3 L0 3Z" fill="#cfcfcf"/></svg><svg style="left:0px;top:127px" width="18" height="18" viewBox="0 0 18 18" fill="none" stroke="#d2d2d2" stroke-width="1.2"><path d="M2 16 L12 5" stroke-width="2"/><path d="M13 1v4M11 3h4M6 3v2M5 4h2M16 7v2M15 8h2" stroke-width="1"/></svg><svg style="left:30px;top:126px" width="20" height="20" viewBox="0 0 20 20" fill="none" stroke="#d2d2d2" stroke-width="1.2"><path d="M9 15 C3 14 1 10 2 7 C3 3 9 2 13 3 C17 4 17 8 15 9" stroke-width="1.3"/><circle cx="5.5" cy="10.5" r="1.8" stroke-width="1.1"/><path d="M9.5 5 L9.5 17.5 L12.5 14 L17.5 13.5Z" fill="#d6d6d6" stroke="#535353" stroke-width="0.6"/></svg><svg style="left:0px;top:151px" width="18" height="18" viewBox="0 0 18 18" fill="none" stroke="#d2d2d2" stroke-width="1.2"><path d="M1 17 L2.5 10.5 L8 5.5 L12.5 10 L7.5 15.5Z" fill="#d2d2d2" stroke="none"/><path d="M9 4.5 L11 2.5 L15.5 7 L13.5 9Z" fill="#d2d2d2" stroke="none"/><path d="M1.5 16.5 L6 12" stroke="#535353" stroke-width="1.1"/></svg><svg style="left:16px;top:165px" width="3" height="3" viewBox="0 0 3 3"><path d="M3 0 L3 3 L0 3Z" fill="#cfcfcf"/></svg><svg style="left:29px;top:151px" width="20" height="18" viewBox="0 0 20 18" fill="none" stroke="#d2d2d2" stroke-width="1.2"><path d="M5 17 L6.5 10.5 L12 5.5 L16.5 10 L11.5 15.5Z" fill="#d2d2d2" stroke="none"/><path d="M13 4.5 L15 2.5 L19.5 7 L17.5 9Z" fill="#d2d2d2" stroke="none"/><path d="M5.5 16.5 L10 12" stroke="#535353" stroke-width="1.1"/><path d="M3.5 17 C1 13 5 10 2.5 5" stroke-width="1.1"/></svg><svg style="left:1px;top:176px" width="17" height="17" viewBox="0 0 17 17" fill="none" stroke="#d2d2d2" stroke-width="1.2"><path d="M2 2.5 H15 M8.5 2.5 V15.5 M6 15.5 H11 M2 2.5 V5 M15 2.5 V5" stroke-width="1.8"/></svg><svg style="left:16px;top:189px" width="3" height="3" viewBox="0 0 3 3"><path d="M3 0 L3 3 L0 3Z" fill="#cfcfcf"/></svg><svg style="left:31px;top:176px" width="17" height="17" viewBox="0 0 17 17" fill="none" stroke="#d2d2d2" stroke-width="1.2"><path d="M1.5 15.5 L15.5 1.5" stroke-width="1.3"/></svg><svg style="left:49px;top:189px" width="3" height="3" viewBox="0 0 3 3"><path d="M3 0 L3 3 L0 3Z" fill="#cfcfcf"/></svg><svg style="left:0px;top:200px" width="19" height="16" viewBox="0 0 19 16" fill="none" stroke="#d2d2d2" stroke-width="1.2"><rect x="1.5" y="1.5" width="15" height="12.5" fill="#666" stroke-width="1.2"/></svg><svg style="left:16px;top:213px" width="3" height="3" viewBox="0 0 3 3"><path d="M3 0 L3 3 L0 3Z" fill="#cfcfcf"/></svg><svg style="left:30px;top:198px" width="20" height="19" viewBox="0 0 20 19" fill="none" stroke="#d2d2d2" stroke-width="1.2"><rect x="1.5" y="7" width="11" height="9.5" stroke-width="1.2"/><path d="M5 13 C7 9 12 7 15 4 L18 1 L19 3 L15 8 C12 11 9 12 7 14Z" fill="#bdbdbd" stroke="none"/></svg><svg style="left:49px;top:213px" width="3" height="3" viewBox="0 0 3 3"><path d="M3 0 L3 3 L0 3Z" fill="#cfcfcf"/></svg><svg style="left:0px;top:223px" width="20" height="18" viewBox="0 0 20 18" fill="none" stroke="#d2d2d2" stroke-width="1.2"><path d="M2 13 C1 7 9 5 9 10 C9 13 5 13 5 11" stroke="#9a9a9a" stroke-width="1.8"/><path d="M7 16 L18 5" stroke="#cfcfcf" stroke-width="3"/></svg><svg style="left:16px;top:237px" width="3" height="3" viewBox="0 0 3 3"><path d="M3 0 L3 3 L0 3Z" fill="#cfcfcf"/></svg><svg style="left:30px;top:223px" width="18" height="18" viewBox="0 0 18 18" fill="none" stroke="#d2d2d2" stroke-width="1.2"><path d="M3 11 L10 3 L16 8 L9 16Z" fill="#cfcfcf" stroke="none"/><path d="M3 11 L6 14 L9 16 L5.5 17 L2 14Z" stroke-width="1"/></svg><svg style="left:49px;top:237px" width="3" height="3" viewBox="0 0 3 3"><path d="M3 0 L3 3 L0 3Z" fill="#cfcfcf"/></svg><svg style="left:0px;top:247px" width="18" height="18" viewBox="0 0 18 18" fill="none" stroke="#d2d2d2" stroke-width="1.2"><path d="M3 6 C7 1 15 3 15 9 C15 15 7 17 4 13" stroke="#a8a8a8" stroke-width="1.8"/><path d="M1 3 L6 8 L1 9Z" fill="#a8a8a8" stroke="none"/></svg><svg style="left:16px;top:261px" width="3" height="3" viewBox="0 0 3 3"><path d="M3 0 L3 3 L0 3Z" fill="#cfcfcf"/></svg><svg style="left:30px;top:246px" width="19" height="19" viewBox="0 0 19 19" fill="none" stroke="#d2d2d2" stroke-width="1.2"><rect x="6.5" y="1.5" width="11" height="9"/><rect x="1.5" y="9.5" width="8" height="8"/><path d="M10 8 L15 3 M12 3 H15 V6" stroke-width="1"/></svg><svg style="left:49px;top:261px" width="3" height="3" viewBox="0 0 3 3"><path d="M3 0 L3 3 L0 3Z" fill="#cfcfcf"/></svg><svg style="left:0px;top:271px" width="18" height="18" viewBox="0 0 18 18" fill="none" stroke="#d2d2d2" stroke-width="1.2"><path d="M2 14 C1 9 4 5 8 7 C11 3 16 6 14 10 C17 14 12 16 9 14 C6 16 3 16 2 14Z" fill="#a5a5a5" stroke="none"/><circle cx="6" cy="11" r="1.6" stroke="#535353" stroke-width="1"/></svg><svg style="left:16px;top:285px" width="3" height="3" viewBox="0 0 3 3"><path d="M3 0 L3 3 L0 3Z" fill="#cfcfcf"/></svg><svg style="left:30px;top:270px" width="19" height="19" viewBox="0 0 19 19" fill="none" stroke="#d2d2d2" stroke-width="1.2"><path d="M1.5 1.5 L1.5 13 L4.5 10 L10 10Z" fill="#cfcfcf" stroke="none"/><rect x="5.5" y="5.5" width="11" height="11" stroke-dasharray="2 1.5" stroke-width="1.1"/></svg><svg style="left:49px;top:285px" width="3" height="3" viewBox="0 0 3 3"><path d="M3 0 L3 3 L0 3Z" fill="#cfcfcf"/></svg><svg style="left:0px;top:295px" width="20" height="18" viewBox="0 0 20 18" fill="none" stroke="#d2d2d2" stroke-width="1.2"><path d="M2 9 C2 3 10 2 14 5 C16 8 14 12 10 13 C6 14 2 13 2 9Z" stroke="#cfcfcf" stroke-width="1.1"/><path d="M3 9h2M6 9h2M9 9h2" stroke-width="1.4"/><path d="M12 8 L12 17 L15 14 L19 15Z" fill="#cfcfcf" stroke="none"/></svg><svg style="left:16px;top:309px" width="3" height="3" viewBox="0 0 3 3"><path d="M3 0 L3 3 L0 3Z" fill="#cfcfcf"/></svg><svg style="left:30px;top:294px" width="19" height="19" viewBox="0 0 19 19" fill="none" stroke="#d2d2d2" stroke-width="1.2"><path d="M1.5 1.5 L1.5 17 L18 17 M1.5 1.5 L10 5 L10 17 M1.5 6 L10 8 M1.5 11 L12 11 M1.5 1.5 L6 3 L6 17" stroke-width="1"/></svg><svg style="left:49px;top:309px" width="3" height="3" viewBox="0 0 3 3"><path d="M3 0 L3 3 L0 3Z" fill="#cfcfcf"/></svg><svg style="left:0px;top:319px" width="19" height="18" viewBox="0 0 19 18" fill="none" stroke="#d2d2d2" stroke-width="1.2"><rect x="1.5" y="2" width="15" height="13.5" stroke-width="1.1"/><path d="M1.5 9 C6 6 10 12 16.5 8 M6 2 C4 7 9 10 7 15.5 M11 2 C13 7 9 10 12 15.5" stroke-width="0.9"/></svg><div class="a" style="left:31px;top:321px;width:16px;height:14px;border:1px solid #cfcfcf;background:linear-gradient(90deg,#222,#bdbdbd)"></div><svg style="left:0px;top:343px" width="19" height="18" viewBox="0 0 19 18" fill="none" stroke="#d2d2d2" stroke-width="1.2"><path d="M2 16 L3 13 L11 5 L13 7 L5 15Z" stroke-width="1.1"/><path d="M10 4 L13 1 C15 0 17 2 16 4 L13 7Z" fill="#cfcfcf" stroke="none"/></svg><svg style="left:16px;top:357px" width="3" height="3" viewBox="0 0 3 3"><path d="M3 0 L3 3 L0 3Z" fill="#cfcfcf"/></svg><svg style="left:29px;top:343px" width="20" height="17" viewBox="0 0 20 17" fill="none" stroke="#d2d2d2" stroke-width="1.2"><rect x="1.5" y="1.5" width="6" height="7" fill="#cfcfcf" stroke="none"/><circle cx="9" cy="9" r="4" fill="#777"/><circle cx="14" cy="12" r="4" stroke-width="1.1"/><circle cx="14" cy="12" r="1.8" stroke-width="1"/></svg><svg style="left:0px;top:366px" width="19" height="19" viewBox="0 0 19 19" fill="none" stroke="#d2d2d2" stroke-width="1.2"><path d="M1 5h2M4 5h2M7 5h2M1 8h3" stroke-width="1.2"/><rect x="8.5" y="6.5" width="7" height="10"/><rect x="10" y="2" width="4" height="3" fill="#cfcfcf" stroke="none"/><circle cx="12" cy="11.5" r="2" stroke-width="1.2"/></svg><svg style="left:16px;top:381px" width="3" height="3" viewBox="0 0 3 3"><path d="M3 0 L3 3 L0 3Z" fill="#cfcfcf"/></svg><svg style="left:29px;top:366px" width="20" height="18" viewBox="0 0 20 18" fill="none" stroke="#d2d2d2" stroke-width="1.2"><path d="M1.5 1.5 V16.5 H19" stroke-width="1.1"/><rect x="5" y="10" width="3" height="6" fill="#cfcfcf" stroke="none"/><rect x="10" y="4" width="3" height="12" fill="#cfcfcf" stroke="none"/><rect x="15" y="7" width="3" height="9" fill="#cfcfcf" stroke="none"/></svg><svg style="left:49px;top:381px" width="3" height="3" viewBox="0 0 3 3"><path d="M3 0 L3 3 L0 3Z" fill="#cfcfcf"/></svg><svg style="left:0px;top:390px" width="19" height="18" viewBox="0 0 19 18" fill="none" stroke="#d2d2d2" stroke-width="1.2"><path d="M4 1 V15 H17 M1 4 H13 L16 7 V15" stroke-width="1.1"/><rect x="5" y="5" width="10" height="9" fill="#7a7a7a" stroke="none"/></svg><svg style="left:29px;top:390px" width="20" height="19" viewBox="0 0 20 19" fill="none" stroke="#d2d2d2" stroke-width="1.2"><path d="M2 17 L5 12 L14 3 L17 6 L8 15Z" stroke-width="1.2"/><path d="M13 2 L15 0.5 L18.5 4 L17 6Z" fill="#cfcfcf" stroke="none"/></svg><svg style="left:49px;top:406px" width="3" height="3" viewBox="0 0 3 3"><path d="M3 0 L3 3 L0 3Z" fill="#cfcfcf"/></svg><svg style="left:0px;top:414px" width="19" height="19" viewBox="0 0 19 19" fill="none" stroke="#d2d2d2" stroke-width="1.2"><path d="M4 16 C1 13 1 10 2 9 C3 8 4 10 5 11 V3 C5 2 7 2 7 3 V9 V2 C7 1 9 1 9 2 V9 V2.5 C9 1.5 11 1.5 11 2.5 V9 V4 C11 3 13 3 13 4 V11 C13 15 11 17 8 17Z" fill="#d0d0d0" stroke="none"/></svg><svg style="left:16px;top:429px" width="3" height="3" viewBox="0 0 3 3"><path d="M3 0 L3 3 L0 3Z" fill="#cfcfcf"/></svg><svg style="left:30px;top:414px" width="19" height="19" viewBox="0 0 19 19" fill="none" stroke="#d2d2d2" stroke-width="1.2"><circle cx="7.5" cy="7.5" r="6"/><path d="M12 12 L17.5 17.5" stroke-width="1.8"/></svg><div class="a" style="left:13px;top:462px;width:35px;height:34px;background:#000;border:1px solid #f0f0f0"></div><div class="a" style="left:21px;top:470px;width:19px;height:19px;border:1.5px solid #f0f0f0;background:#565656"></div><div class="a" style="left:0px;top:444px;width:29px;height:34px;background:#fdfdfd"></div><svg style="left:37px;top:443px" width="13" height="14" viewBox="0 0 13 14"><path d="M3 4 C7 3 10 5 10 10" fill="none" stroke="#cfcfcf" stroke-width="1.3"/><path d="M4 1 L1 4 L4 7 M7 9 L10 12 L13 9" fill="none" stroke="#cfcfcf" stroke-width="1.3"/></svg><svg style="left:0px;top:483px" width="8" height="13" viewBox="0 0 8 13"><rect x="-3" y="4" width="9" height="8" fill="#111" stroke="#eee" stroke-width="1.2"/><rect x="-3" y="1" width="6" height="6" fill="#eee"/></svg><div class="a" style="left:0px;top:506px;width:11px;height:14px;background:#fdfdfd"></div><div class="a" style="left:17px;top:506px;width:13px;height:14px;border:1px solid #333;background:linear-gradient(90deg,#f0f0f0,#222)"></div><div class="a" style="left:37px;top:506px;width:13px;height:14px;border:1px solid #333;background:#fff"></div><svg style="left:37px;top:506px" width="13" height="14" viewBox="0 0 13 14"><path d="M2 12.5 L11 1.5" stroke="#e02020" stroke-width="1.5"/></svg><div class="a" style="left:0px;top:530px;width:14px;height:15px;background:#474747"></div><svg style="left:0px;top:531px" width="14" height="14" viewBox="0 0 14 14"><rect x="-2" y="1" width="8" height="8" fill="#bcbcbc"/><rect x="3" y="5" width="8" height="8" fill="#8a8a8a"/></svg><svg style="left:18px;top:531px" width="14" height="14" viewBox="0 0 14 14"><circle cx="5" cy="5" r="4" fill="#8a8a8a"/><rect x="5" y="6" width="7" height="7" fill="#bcbcbc"/></svg><svg style="left:37px;top:531px" width="14" height="14" viewBox="0 0 14 14"><circle cx="6" cy="6" r="4" fill="none" stroke="#6a6a6a" stroke-width="1"/><rect x="6" y="6" width="6" height="6" fill="none" stroke="#6a6a6a" stroke-width="1"/></svg><svg style="left:12px;top:554px" width="24" height="19" viewBox="0 0 24 19"><rect x="8.5" y="1.5" width="14" height="10" fill="#8a8a8a" stroke="#cfcfcf" stroke-width="1"/><rect x="1.5" y="6.5" width="12" height="10" fill="#7a7a7a" stroke="#cfcfcf" stroke-width="1"/></svg><div class="a" style="left:16.0px;top:593px;width:3px;height:3px;border-radius:50%;background:#cfcfcf"></div><div class="a" style="left:22.5px;top:593px;width:3px;height:3px;border-radius:50%;background:#cfcfcf"></div><div class="a" style="left:29.0px;top:593px;width:3px;height:3px;border-radius:50%;background:#cfcfcf"></div></body></html>
